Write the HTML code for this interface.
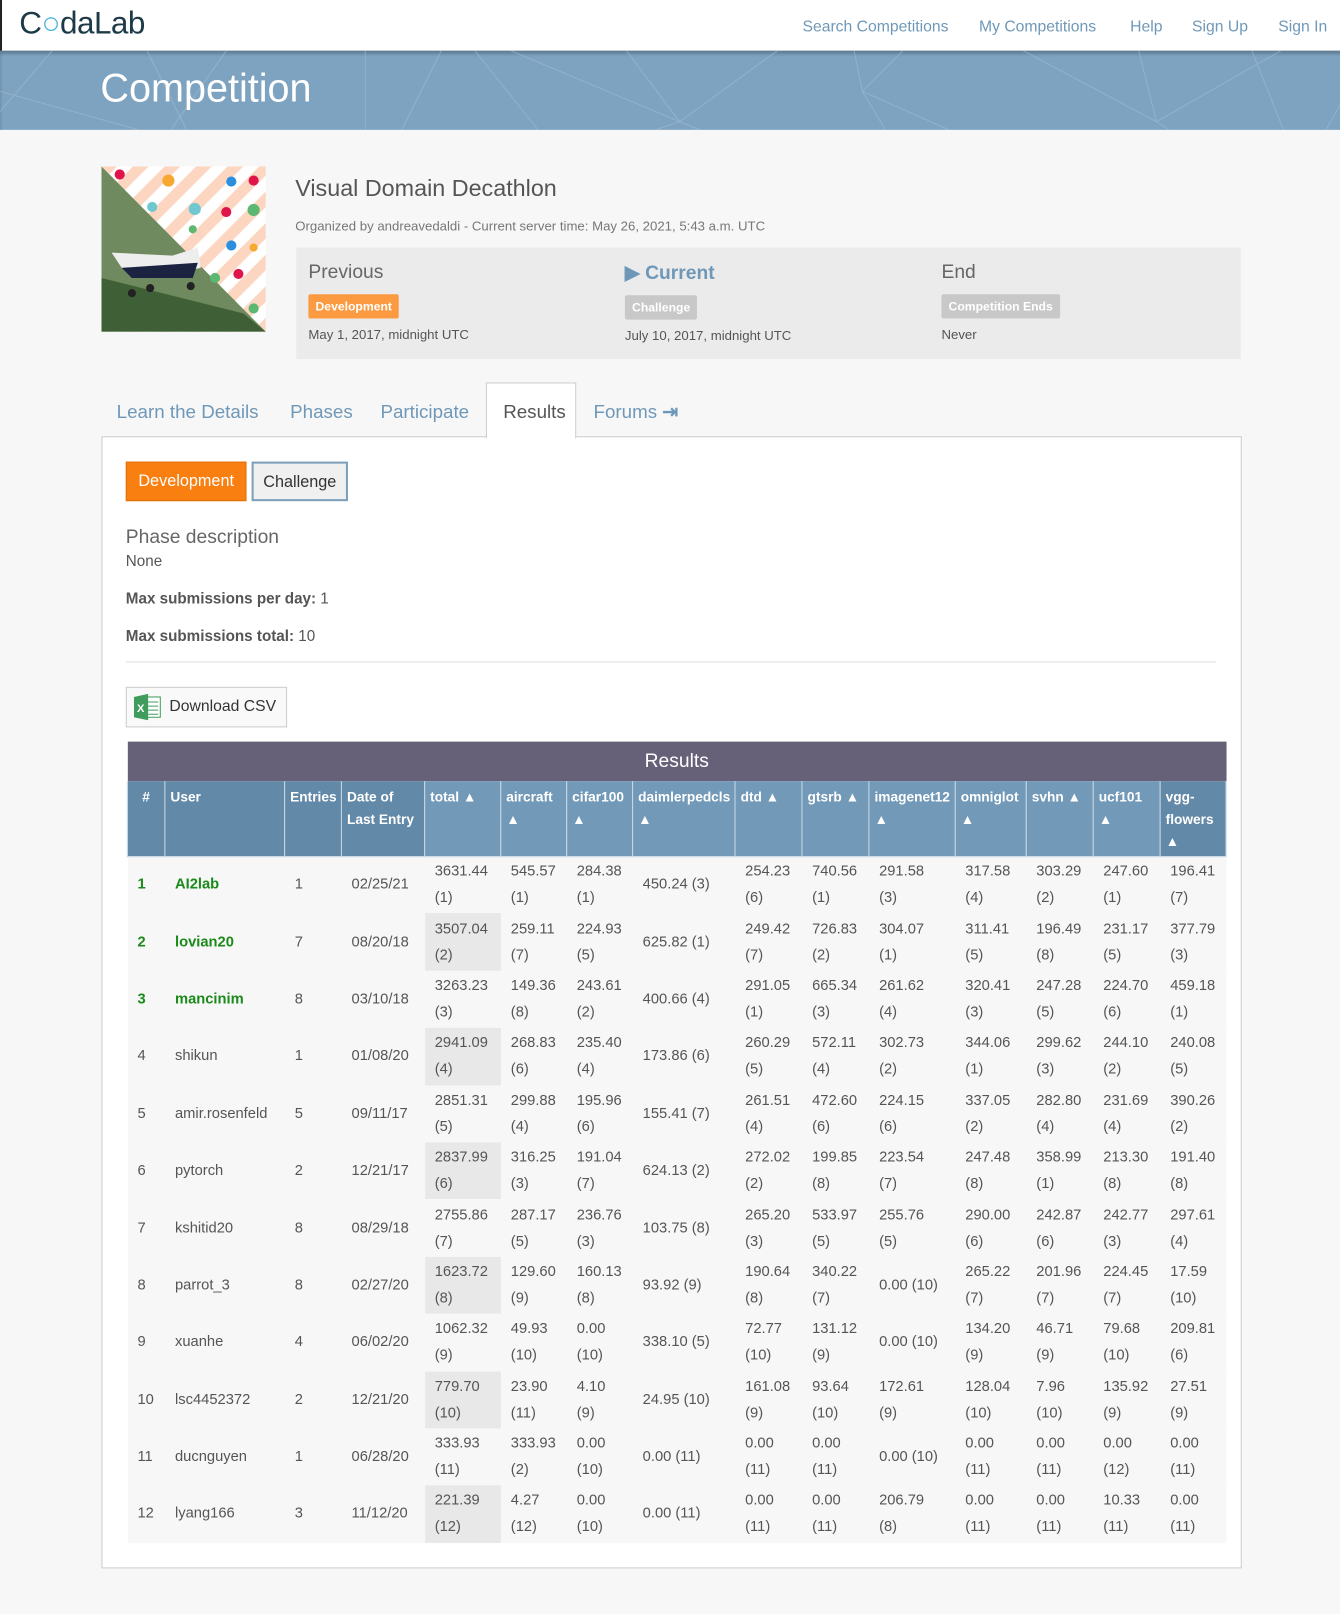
<!DOCTYPE html>
<html><head><meta charset="utf-8">
<style>
*{box-sizing:border-box;margin:0;padding:0}
body{width:1340px;height:1591px;background:#f7f7f7;font-family:"Liberation Sans",sans-serif;color:#555;position:relative;overflow:hidden}
#w{position:absolute;left:0;top:0;width:1340px;height:1591px;transform:scale(1.0145);transform-origin:0 0}
.top{position:absolute;left:0;top:0;width:1340px;height:50px;background:#fff;border-left:2px solid #222}
.logo{position:absolute;left:17px;top:5px;font-size:31px;color:#1c3a47;letter-spacing:-0.5px}
.nav{position:absolute;top:18px;font-size:15.5px;color:#6f98b8}
.banner{position:absolute;left:0;top:50px;width:1340px;height:78px;background:#7ea3c1;box-shadow:inset 0 3px 3px rgba(0,0,0,.25);overflow:hidden}
.banner h1{position:absolute;left:99px;top:16px;font-weight:normal;color:#fff;font-size:39px}
.img{position:absolute;left:100px;top:164px;width:162px;height:163px}
.title{position:absolute;left:291px;top:172px;font-size:23px;color:#555}
.org{position:absolute;left:291px;top:215px;font-size:13px;color:#777}
.phases{position:absolute;left:292px;top:244px;width:931px;height:110px;background:#ebebeb}
.ph{position:absolute;top:14px;font-size:13px;color:#555}
.ph .h{font-size:19px;color:#666;margin-bottom:10px}
.badge{display:inline-block;color:#fff;font-weight:bold;font-size:12px;padding:5px 7px;border-radius:2px;margin-bottom:8px}
.tab{position:absolute;top:18px;font-size:18.5px;color:#6f98b8;white-space:nowrap}
.tabsel{position:absolute;left:479px;top:377px;width:89px;height:55px;background:#fff;border:1px solid #ccc;border-bottom:none;z-index:2}
.main{position:absolute;left:100px;top:430px;width:1124px;height:1116px;background:#fff;border:1px solid #ccc}
.btn{position:absolute;top:24px;height:39px;font-size:16px;line-height:37px;text-align:center}
table{position:absolute;left:24px;top:300px;border-collapse:collapse;table-layout:fixed;width:1083px;font-size:14.5px}
th{background:#7299b8;color:#fff;font-size:13.5px;text-align:left;vertical-align:top;padding:5px 5px 2px;line-height:22px;border:1px solid #c9d9e6;border-top:none;height:74px;font-weight:bold}
th.d{background:#6389a8}
td{background:#f7f7f7;padding:0 5px 0 10px;line-height:26px;height:56.4px;vertical-align:middle;color:#555}
td.g{background:#e8e8e8}
td.w{color:#1a8a1a;font-weight:bold}
</style></head><body>
<div id="w">
<div class="top">
<div class="logo">C<span style="color:#4fb6e0">○</span>daLab</div>
<div class="nav" style="left:789px">Search Competitions</div>
<div class="nav" style="left:963px">My Competitions</div>
<div class="nav" style="left:1112px">Help</div>
<div class="nav" style="left:1173px">Sign Up</div>
<div class="nav" style="left:1258px">Sign In</div>
</div>
<div class="banner">
<svg width="1340" height="78" style="position:absolute;left:0;top:0" stroke="#9fbcd3" stroke-width="1" fill="none" opacity=".6">
<path d="M0 40 L180 90 M60 -10 L0 60 M140 -10 L190 90 M230 -10 L160 90 M360 -10 L360 90 M440 -10 L390 90 M460 -10 L540 90 M480 -10 L670 70 L610 90 M610 -10 L670 70 L780 -10 M670 70 L720 90 M840 -10 L850 40 L940 80 M850 40 L900 -10 M850 40 L880 90 M990 -10 L1140 70 L1280 -10 M1120 -10 L1140 70 M1140 70 L1170 90 M1230 -10 L1270 90 M1340 20 L1300 90"/>
</svg>
<h1>Competition</h1>
</div>
<svg class="img" viewBox="0 0 162 163">
<defs><pattern id="st" width="22" height="22" patternUnits="userSpaceOnUse" patternTransform="rotate(45)"><rect width="11" height="22" fill="#fcd6c0"/><rect x="11" width="11" height="22" fill="#fff"/></pattern></defs>
<rect width="162" height="163" fill="url(#st)"/>
<polygon points="0,0 162,163 0,163" fill="#6f8a5f"/>
<polygon points="0,110 140,145 162,163 0,163" fill="#3f5f37"/>
<circle cx="18" cy="8" r="5" fill="#e0144a"/><circle cx="66" cy="14" r="6" fill="#f7a830"/><circle cx="128" cy="15" r="5" fill="#2b8fe0"/><circle cx="150" cy="14" r="5" fill="#e0144a"/><circle cx="50" cy="40" r="5" fill="#6fc8d0"/><circle cx="92" cy="42" r="6" fill="#6fc8d0"/><circle cx="123" cy="45" r="5" fill="#e0144a"/><circle cx="150" cy="43" r="6" fill="#5cb870"/><circle cx="80" cy="95" r="5" fill="#5cb870"/><circle cx="128" cy="78" r="5" fill="#2b8fe0"/><circle cx="150" cy="80" r="4" fill="#f7a830"/><circle cx="135" cy="106" r="5" fill="#e0144a"/><circle cx="112" cy="110" r="5" fill="#5cb870"/><circle cx="150" cy="140" r="5" fill="#5cb870"/><circle cx="90" cy="62" r="4" fill="#5cb870"/>
<path d="M10 85 L70 88 L95 80 L98 100 L60 108 L20 100 Z" fill="#eee"/><path d="M20 100 L95 95 L90 110 L30 110 Z" fill="#1b2340"/><circle cx="30" cy="125" r="4" fill="#222"/><circle cx="48" cy="120" r="4" fill="#222"/><circle cx="88" cy="118" r="4" fill="#222"/>
</svg>
<div class="title">Visual Domain Decathlon</div>
<div class="org">Organized by andreavedaldi - Current server time: May 26, 2021, 5:43 a.m. UTC</div>
<div class="phases">
<div class="ph" style="left:12px"><div class="h">Previous</div><span class="badge" style="background:#fb9a40">Development</span><br>May 1, 2017, midnight UTC</div>
<div class="ph" style="left:324px"><div class="h" style="color:#6f98b8;font-weight:bold">▶ Current</div><span class="badge" style="background:#c8c8c8">Challenge</span><br>July 10, 2017, midnight UTC</div>
<div class="ph" style="left:636px"><div class="h">End</div><span class="badge" style="background:#c8c8c8">Competition Ends</span><br>Never</div>
</div>
<div class="tabsel"></div>
<div class="tab" style="left:115px;top:395px">Learn the Details</div>
<div class="tab" style="left:286px;top:395px">Phases</div>
<div class="tab" style="left:375px;top:395px">Participate</div>
<div class="tab" style="left:496px;top:395px;color:#555;z-index:3">Results</div>
<div class="tab" style="left:585px;top:395px">Forums <b>⇥</b></div>
<div class="main">
<div class="btn" style="left:23px;width:119px;background:#f97f10;border:1px solid #e0700a;color:#fff">Development</div>
<div class="btn" style="left:147px;width:95px;background:#f0f0f0;border:2px solid #7d9fb9;color:#333">Challenge</div>
<div style="position:absolute;left:23px;top:88px;font-size:19px;color:#666">Phase description</div>
<div style="position:absolute;left:23px;top:114px;font-size:15px">None</div>
<div style="position:absolute;left:23px;top:151px;font-size:15px"><b>Max submissions per day:</b> 1</div>
<div style="position:absolute;left:23px;top:188px;font-size:15px"><b>Max submissions total:</b> 10</div>
<div style="position:absolute;left:23px;top:221px;width:1075px;border-top:1px solid #ddd"></div>
<div style="position:absolute;left:23px;top:246px;width:159px;height:40px;border:1px solid #ccc;background:#f9f9f9;font-size:15.5px;line-height:38px;padding-left:42px;color:#333">
<svg width="28" height="26" style="position:absolute;left:7px;top:6px"><rect x="10" y="3" width="16" height="20" fill="#fff" stroke="#3f9c5c"/><path d="M14 8h10M14 12h10M14 16h10M14 20h10" stroke="#3f9c5c"/><polygon points="0,3 14,0 14,26 0,23" fill="#3f9c5c"/><text x="3" y="18" fill="#fff" font-size="11" font-weight="bold" font-family="Liberation Sans">X</text></svg>Download CSV</div>
<table>
<colgroup><col style="width:37px"><col style="width:118px"><col style="width:56px"><col style="width:82px"><col style="width:75px"><col style="width:65px"><col style="width:65px"><col style="width:101px"><col style="width:66px"><col style="width:66px"><col style="width:85px"><col style="width:70px"><col style="width:66px"><col style="width:66px"><col style="width:65px"></colgroup>
<tr><td colspan="15" style="background:#666179;color:#fff;padding:0;height:39px;line-height:39px;text-align:center;font-size:19px">Results</td></tr>
<tr><th class="d" style="text-align:center">#</th><th class="d">User</th><th class="d">Entries</th><th class="d">Date of Last Entry</th><th>total ▲</th><th>aircraft ▲</th><th>cifar100 ▲</th><th>daimlerpedcls ▲</th><th>dtd ▲</th><th>gtsrb ▲</th><th>imagenet12 ▲</th><th>omniglot ▲</th><th>svhn ▲</th><th>ucf101 ▲</th><th class="d">vgg-flowers ▲</th></tr>
<tr><td class="w">1</td><td class="w">AI2lab</td><td>1</td><td>02/25/21</td><td>3631.44<br>(1)</td><td>545.57<br>(1)</td><td>284.38<br>(1)</td><td>450.24 (3)</td><td>254.23<br>(6)</td><td>740.56<br>(1)</td><td>291.58<br>(3)</td><td>317.58<br>(4)</td><td>303.29<br>(2)</td><td>247.60<br>(1)</td><td>196.41<br>(7)</td></tr>
<tr><td class="w">2</td><td class="w">lovian20</td><td>7</td><td>08/20/18</td><td class="g">3507.04<br>(2)</td><td>259.11<br>(7)</td><td>224.93<br>(5)</td><td>625.82 (1)</td><td>249.42<br>(7)</td><td>726.83<br>(2)</td><td>304.07<br>(1)</td><td>311.41<br>(5)</td><td>196.49<br>(8)</td><td>231.17<br>(5)</td><td>377.79<br>(3)</td></tr>
<tr><td class="w">3</td><td class="w">mancinim</td><td>8</td><td>03/10/18</td><td>3263.23<br>(3)</td><td>149.36<br>(8)</td><td>243.61<br>(2)</td><td>400.66 (4)</td><td>291.05<br>(1)</td><td>665.34<br>(3)</td><td>261.62<br>(4)</td><td>320.41<br>(3)</td><td>247.28<br>(5)</td><td>224.70<br>(6)</td><td>459.18<br>(1)</td></tr>
<tr><td>4</td><td>shikun</td><td>1</td><td>01/08/20</td><td class="g">2941.09<br>(4)</td><td>268.83<br>(6)</td><td>235.40<br>(4)</td><td>173.86 (6)</td><td>260.29<br>(5)</td><td>572.11<br>(4)</td><td>302.73<br>(2)</td><td>344.06<br>(1)</td><td>299.62<br>(3)</td><td>244.10<br>(2)</td><td>240.08<br>(5)</td></tr>
<tr><td>5</td><td>amir.rosenfeld</td><td>5</td><td>09/11/17</td><td>2851.31<br>(5)</td><td>299.88<br>(4)</td><td>195.96<br>(6)</td><td>155.41 (7)</td><td>261.51<br>(4)</td><td>472.60<br>(6)</td><td>224.15<br>(6)</td><td>337.05<br>(2)</td><td>282.80<br>(4)</td><td>231.69<br>(4)</td><td>390.26<br>(2)</td></tr>
<tr><td>6</td><td>pytorch</td><td>2</td><td>12/21/17</td><td class="g">2837.99<br>(6)</td><td>316.25<br>(3)</td><td>191.04<br>(7)</td><td>624.13 (2)</td><td>272.02<br>(2)</td><td>199.85<br>(8)</td><td>223.54<br>(7)</td><td>247.48<br>(8)</td><td>358.99<br>(1)</td><td>213.30<br>(8)</td><td>191.40<br>(8)</td></tr>
<tr><td>7</td><td>kshitid20</td><td>8</td><td>08/29/18</td><td>2755.86<br>(7)</td><td>287.17<br>(5)</td><td>236.76<br>(3)</td><td>103.75 (8)</td><td>265.20<br>(3)</td><td>533.97<br>(5)</td><td>255.76<br>(5)</td><td>290.00<br>(6)</td><td>242.87<br>(6)</td><td>242.77<br>(3)</td><td>297.61<br>(4)</td></tr>
<tr><td>8</td><td>parrot_3</td><td>8</td><td>02/27/20</td><td class="g">1623.72<br>(8)</td><td>129.60<br>(9)</td><td>160.13<br>(8)</td><td>93.92 (9)</td><td>190.64<br>(8)</td><td>340.22<br>(7)</td><td>0.00 (10)</td><td>265.22<br>(7)</td><td>201.96<br>(7)</td><td>224.45<br>(7)</td><td>17.59<br>(10)</td></tr>
<tr><td>9</td><td>xuanhe</td><td>4</td><td>06/02/20</td><td>1062.32<br>(9)</td><td>49.93<br>(10)</td><td>0.00<br>(10)</td><td>338.10 (5)</td><td>72.77<br>(10)</td><td>131.12<br>(9)</td><td>0.00 (10)</td><td>134.20<br>(9)</td><td>46.71<br>(9)</td><td>79.68<br>(10)</td><td>209.81<br>(6)</td></tr>
<tr><td>10</td><td>lsc4452372</td><td>2</td><td>12/21/20</td><td class="g">779.70<br>(10)</td><td>23.90<br>(11)</td><td>4.10<br>(9)</td><td>24.95 (10)</td><td>161.08<br>(9)</td><td>93.64<br>(10)</td><td>172.61<br>(9)</td><td>128.04<br>(10)</td><td>7.96<br>(10)</td><td>135.92<br>(9)</td><td>27.51<br>(9)</td></tr>
<tr><td>11</td><td>ducnguyen</td><td>1</td><td>06/28/20</td><td>333.93<br>(11)</td><td>333.93<br>(2)</td><td>0.00<br>(10)</td><td>0.00 (11)</td><td>0.00<br>(11)</td><td>0.00<br>(11)</td><td>0.00 (10)</td><td>0.00<br>(11)</td><td>0.00<br>(11)</td><td>0.00<br>(12)</td><td>0.00<br>(11)</td></tr>
<tr><td>12</td><td>lyang166</td><td>3</td><td>11/12/20</td><td class="g">221.39<br>(12)</td><td>4.27<br>(12)</td><td>0.00<br>(10)</td><td>0.00 (11)</td><td>0.00<br>(11)</td><td>0.00<br>(11)</td><td>206.79<br>(8)</td><td>0.00<br>(11)</td><td>0.00<br>(11)</td><td>10.33<br>(11)</td><td>0.00<br>(11)</td></tr>
</table>
</div>
</div>
</body></html>
